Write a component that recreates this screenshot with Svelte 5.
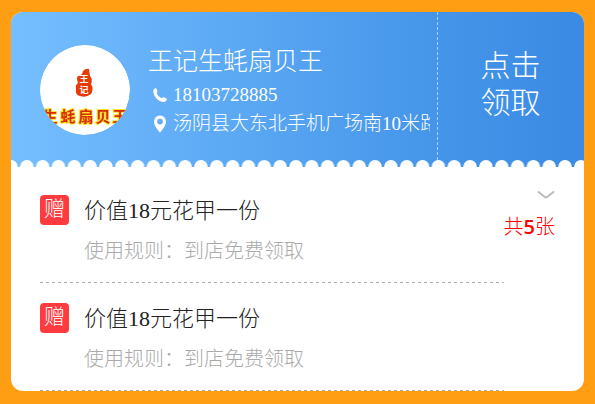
<script>
  const shop = {
    name: '王记生蚝扇贝王',
    phone: '18103728885',
    address: '汤阴县大东北手机广场南10米路西'
  };
  const coupons = [
    { id: 1, title: '价值18元花甲一份', rule: '使用规则：到店免费领取' },
    { id: 2, title: '价值18元花甲一份', rule: '使用规则：到店免费领取' }
  ];
  const total = 5;
</script>

<main>
  <article class="card">
    <header>
      <svg class="avatar" viewBox="0 0 90 90" role="img" aria-label={shop.name}>
        <circle cx="45" cy="45" r="45" fill="#fff" />
        <path
          d="M43 26 Q46 23 49 24 L50 31 Q53 34 51 39 Q54 44 51 49 Q46 53 40 51 Q35 50 36 44 Q35 40 38 38 Q36 33 38 31 Q42 31 43 26Z"
          fill="#e83a06"
        />
        <g class="seal">
          <text x="44" y="37">王</text>
          <text x="44" y="48">记</text>
        </g>
        <g class="brush">
          <text x="10" y="77">生</text>
          <text x="28" y="77">蚝</text>
          <text x="46" y="77">扇</text>
          <text x="63" y="77">贝</text>
          <text x="80" y="77">王</text>
        </g>
      </svg>
      <div class="info">
        <h1>{shop.name}</h1>
        <a class="line" href="tel:{shop.phone}">
          <svg viewBox="0 0 16 16" aria-hidden="true">
            <path d="M1.2 3.2 Q2.5 1 4.3 1.4 Q5.8 3.5 5.4 4.7 L4.6 6.2 Q6 9.5 9.4 11.2 L11 10.3 Q13 10 15 12 Q14.8 14.3 12.4 14.9 Q7.5 15 4 11 Q.8 7.2 1.2 3.2Z" />
          </svg>
          <span>{shop.phone}</span>
        </a>
        <p class="line">
          <svg viewBox="0 0 16 18" aria-hidden="true">
            <path fill-rule="evenodd" d="M8 .5a6 6 0 0 1 6 6.2C14 10.5 10.5 14.5 8 17.5 5.5 14.5 2 10.5 2 6.7A6 6 0 0 1 8 .5ZM8 3.7a2.9 2.9 0 1 0 0 5.8 2.9 2.9 0 0 0 0-5.8Z" />
          </svg>
          <span>{shop.address}</span>
        </p>
      </div>
      <button class="claim">点击<br />领取</button>
      <svg class="scallops" aria-hidden="true">
        <defs>
          <pattern id="scallop" width="15.83" height="7" patternUnits="userSpaceOnUse">
            <path d="M0 0A6.8 7 0 0 1 6.8 7H0ZM15.83 0A6.8 7 0 0 0 9.03 7H15.83Z" fill="#fff" />
          </pattern>
        </defs>
        <rect width="100%" height="7" fill="url(#scallop)" />
      </svg>
    </header>

    <section class="body">
      <ul>
        {#each coupons as coupon (coupon.id)}
          <li>
            <span class="badge">赠</span>
            <div>
              <h2>{coupon.title}</h2>
              <p>{coupon.rule}</p>
            </div>
          </li>
        {/each}
      </ul>
      <button class="more">
        <svg viewBox="0 0 18 10" aria-hidden="true">
          <path d="M1 1.5 7.5 6.8Q9 8 10.5 6.8L17 1.5" />
        </svg>
        <span>共<b>{total}</b>张</span>
      </button>
    </section>
  </article>
</main>

<style>
  :global(body) {
    margin: 0;
    background: #ff9e12;
  }
  main {
    padding: 12px 11px 13px;
    font-family: 'Liberation Serif', 'Noto Sans CJK SC', sans-serif;
    font-weight: 300;
  }
  h1, h2, p, ul {
    margin: 0;
    padding: 0;
    font-weight: 300;
  }
  button {
    border: 0;
    padding: 0;
    background: none;
    font: inherit;
    cursor: pointer;
  }
  .card {
    border-radius: 12px;
    background: #fff;
    overflow: hidden;
  }
  header {
    position: relative;
    display: flex;
    height: 155px;
    padding-left: 29px;
    color: #fff;
    background: linear-gradient(90deg, #75beff, #4696ea 72%, #3a8ae3);
  }
  .avatar {
    flex: none;
    width: 90px;
    height: 90px;
    margin: 33px 18px 0 0;
    border-radius: 50%;
  }
  .avatar text {
    font-family: 'Noto Sans CJK SC', sans-serif;
    font-weight: 700;
    text-anchor: middle;
  }
  .seal {
    fill: #fff;
    font-size: 9px;
  }
  .brush {
    fill: #d92c05;
    stroke: #ffe62e;
    stroke-width: 2px;
    paint-order: stroke;
    font-size: 15px;
  }
  .info {
    flex: 1;
    min-width: 0;
    padding: 32px 7px 0 0;
  }
  h1 {
    font-size: 25px;
    line-height: 36px;
    white-space: nowrap;
  }
  .line {
    display: flex;
    align-items: center;
    gap: 5px;
    padding-left: 4px;
    font-size: 19px;
    line-height: 29px;
    color: inherit;
    text-decoration: none;
  }
  .line svg {
    flex: none;
    width: 16px;
    fill: #fff;
  }
  .line span {
    overflow: hidden;
    white-space: nowrap;
  }
  .claim {
    flex: none;
    width: 147px;
    padding-bottom: 11px;
    background: repeating-linear-gradient(180deg, #a9d0fa 0 3px, transparent 3px 5px) left / 1px 100% no-repeat;
    color: #fff;
    font-size: 30px;
    line-height: 37px;
  }
  .scallops {
    position: absolute;
    left: 0;
    bottom: 0;
    width: 100%;
    height: 7px;
  }
  .body {
    display: flex;
    justify-content: space-between;
    padding: 8px 29px 0;
  }
  ul {
    flex: 1;
    list-style: none;
  }
  li {
    display: flex;
    gap: 15px;
    padding: 20px 0 12px;
    background: repeating-linear-gradient(90deg, #aaa 0 3px, transparent 3px 6px) bottom / 100% 1px no-repeat;
  }
  .badge {
    flex: none;
    width: 29px;
    height: 30px;
    border-radius: 4px;
    background: #ff3b3f;
    color: #fff;
    font-size: 21px;
    line-height: 29px;
    text-align: center;
  }
  h2 {
    color: #222;
    font-size: 22px;
    line-height: 31px;
  }
  li p {
    padding-top: 5px;
    color: #aaa;
    font-size: 20px;
    line-height: 40px;
  }
  .more {
    display: flex;
    flex-direction: column;
    align-items: flex-end;
    gap: 12px;
    align-self: flex-start;
    padding-top: 15px;
    color: #f00;
    font-size: 20px;
    line-height: 30px;
  }
  .more svg {
    width: 18px;
    fill: none;
    stroke: #bbb;
    stroke-width: 2;
  }
  b {
    font-family: 'Open Sans', sans-serif;
    font-weight: 600;
  }
</style>
